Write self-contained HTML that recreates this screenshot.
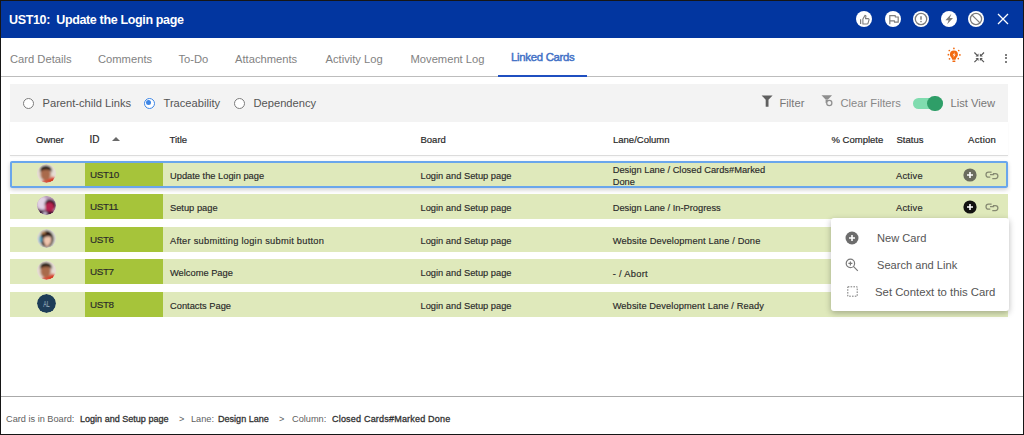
<!DOCTYPE html>
<html><head><meta charset="utf-8">
<style>
*{margin:0;padding:0;box-sizing:border-box}
html,body{width:1024px;height:435px;overflow:hidden;background:#fff}
body{font-family:"Liberation Sans",sans-serif;position:relative;color:#333}
.a{position:absolute;white-space:nowrap;line-height:1}
#frame{position:absolute;left:0;top:0;width:1024px;height:435px;border:1px solid #161616;pointer-events:none;z-index:50}
#hdr{position:absolute;left:0;top:0;width:1024px;height:38px;background:#0236a0}
.title{left:9px;top:14px;font-size:12.5px;font-weight:bold;color:#fff;letter-spacing:-0.35px}
.hic{position:absolute;top:10.5px;width:16.5px;height:16.5px;border-radius:50%;background:#fff}
.hic svg{position:absolute;left:0;top:0;width:16.5px;height:16.5px}
.tab{top:53.5px;font-size:11.2px;color:#828282}
.tabline{position:absolute;left:1px;top:76px;width:1022px;height:1px;background:#bdbdbd}
.panel{position:absolute;left:10px;top:84px;width:998px;height:38px;background:#f3f3f3}
.rad{position:absolute;top:98px;width:11px;height:11px;border-radius:50%;border:1.6px solid #7c7c7c;background:#fff}
.rlab{top:98px;font-size:11.15px;color:#555}
.th{position:absolute;left:10px;top:122px;width:998px;height:34px;background:#fff;border-bottom:1px solid #dcdcdc;box-shadow:0 1px 2px rgba(0,0,0,0.04)}
.hl{top:135px;font-size:9.5px;color:#2a2a2a;-webkit-text-stroke:0.2px #2a2a2a}
.row{position:absolute;left:10px;width:998px;height:25px;background:#dfe9bb}
.idc{position:absolute;left:75px;top:0;width:78px;height:100%;background:#a6c43a}
.idt{font-size:9.9px !important;letter-spacing:-0.4px}
.cell{font-size:9.3px;color:#2a2a2a;-webkit-text-stroke:0.15px #2a2a2a}
.av{position:absolute;left:37px;width:19px;height:19px;border-radius:50%;overflow:hidden}
.ic{position:absolute}
.pop{font-size:11.1px;color:#555}
.foot{top:415px;font-size:9.2px;color:#606060}
.fb{font-weight:normal;color:#333;font-size:9.05px;-webkit-text-stroke:0.3px #333}
</style></head>
<body>
<div id="hdr"></div>
<div class="a title">UST10:&nbsp; Update the Login page</div>
<svg class="ic" style="left:856px;top:10.5px" width="16" height="16" viewBox="0 0 16 16"><circle cx="8" cy="8" r="8" fill="#fff"/><path d="M4.6 8.2v4.8" fill="none" stroke="#7d7d7d" stroke-width="1.2"/><path d="M6.9 13V8.1L8.9 4.4c.7 0 1.1.5 1 1.1l-.4 2.1h2.6c.7 0 1.1.6.9 1.2l-1 3.5c-.1.4-.5.7-.9.7z" fill="none" stroke="#7d7d7d" stroke-width="1.1" stroke-linejoin="round"/></svg>
<svg class="ic" style="left:885.2px;top:10.5px" width="16" height="16" viewBox="0 0 16 16"><circle cx="8" cy="8" r="8" fill="#fff"/><path d="M4.8 13.2V4.6h5.3l.3 1.4h2.8v5.2H9.6l-.3-1.4H4.8" fill="none" stroke="#7d7d7d" stroke-width="1.2" stroke-linejoin="miter"/></svg>
<svg class="ic" style="left:913px;top:10.5px" width="16" height="16" viewBox="0 0 16 16"><circle cx="8" cy="8" r="8" fill="#fff"/><circle cx="8" cy="8" r="5.7" fill="none" stroke="#7d7d7d" stroke-width="1.3"/><path d="M8 5.2v3.6" stroke="#7d7d7d" stroke-width="1.5"/><circle cx="8" cy="10.6" r=".8" fill="#7d7d7d"/></svg>
<svg class="ic" style="left:940.6px;top:10.5px" width="16" height="16" viewBox="0 0 16 16"><circle cx="8" cy="8" r="8" fill="#fff"/><path d="M10.4 2.8 4.4 9.2h3.2l-1.4 4.1 5.8-6.4H8.8z" fill="#7d7d7d"/></svg>
<svg class="ic" style="left:968.1px;top:10.5px" width="16" height="16" viewBox="0 0 16 16"><circle cx="8" cy="8" r="8" fill="#fff"/><circle cx="8" cy="8" r="5.6" fill="none" stroke="#7d7d7d" stroke-width="1.3"/><path d="M4.1 4.1 11.9 11.9" stroke="#7d7d7d" stroke-width="1.3"/></svg>
<svg class="ic" style="left:997.3px;top:12.7px" width="12" height="12" viewBox="0 0 12 12"><path d="M1 1 11 11M11 1 1 11" stroke="#fff" stroke-width="1.3"/></svg>

<!-- tabs -->
<div class="a tab" style="left:10px">Card Details</div>
<div class="a tab" style="left:98px">Comments</div>
<div class="a tab" style="left:178.5px">To-Do</div>
<div class="a tab" style="left:235px">Attachments</div>
<div class="a tab" style="left:325.5px">Activity Log</div>
<div class="a tab" style="left:410.5px">Movement Log</div>
<div class="a tab" style="left:511px;top:51.5px;color:#4170c6;font-size:11.4px;letter-spacing:-0.3px;-webkit-text-stroke:0.45px #4170c6">Linked Cards</div>
<div class="tabline"></div>
<svg class="ic" style="left:946px;top:47px" width="16" height="17" viewBox="0 0 16 17"><g fill="#f26a10"><path d="M3.9 7.6a4 4 0 0 1 8 0c0 1.7-1.1 2.7-1.7 3.5L9.5 12.8H6.3L5.6 11.1C5 10.3 3.9 9.3 3.9 7.6Z"/><rect x="6.3" y="13.4" width="3.2" height="1.5" rx=".7"/><circle cx="7.9" cy="1.4" r=".85"/><circle cx="3.3" cy="3.5" r=".85"/><circle cx="12.7" cy="3.5" r=".85"/><circle cx="2.4" cy="7.7" r=".85"/><circle cx="13.9" cy="7.9" r=".85"/><circle cx="3.5" cy="11.8" r=".85"/><circle cx="12.3" cy="11.6" r=".85"/></g><path d="M8.9 5.2 6.6 8.3h1.5l-.8 2.4 2.3-3.2H8.2z" fill="#fff"/></svg>
<svg class="ic" style="left:973px;top:51px" width="13" height="13" viewBox="0 0 13 13"><g transform="translate(0.2 0.3)"><g stroke="#555" stroke-width="1.2" fill="none"><path d="M1.2 1.2 4 4M10.8 1.2 8 4M1.2 10.8 4 8M10.8 10.8 8 8"/></g><g fill="#555"><path d="M5.3 5.3V2.3L2.3 5.3z"/><path d="M6.7 5.3V2.3l3 3z"/><path d="M5.3 6.7v3l-3-3z"/><path d="M6.7 6.7v3l3-3z"/></g></g></svg>
<div style="position:absolute;left:1005.2px;top:53.5px;width:2px;height:2px;background:#555;border-radius:1px"></div>
<div style="position:absolute;left:1005.2px;top:57.2px;width:2px;height:2px;background:#555;border-radius:1px"></div>
<div style="position:absolute;left:1005.2px;top:61px;width:2px;height:2px;background:#555;border-radius:1px"></div>

<div style="position:absolute;left:498px;top:74.5px;width:89px;height:2.5px;background:#1f4fc0"></div>

<!-- panel -->
<div class="panel"></div>
<div class="rad" style="left:22.5px"></div>
<div class="a rlab" style="left:42.5px">Parent-child Links</div>
<div class="rad" style="left:144px;border-color:#3d86e6"><div style="position:absolute;left:1.4px;top:1.4px;width:5px;height:5px;border-radius:50%;background:#3d86e6"></div></div>
<div class="a rlab" style="left:163.5px">Traceability</div>
<div class="rad" style="left:233.5px"></div>
<div class="a rlab" style="left:253.5px">Dependency</div>

<svg class="ic" style="left:761px;top:95px" width="12" height="12" viewBox="0 0 12 12"><path d="M0.6 0.4h11l-4.1 4.3v7H4.7v-7z" fill="#5f5f5f"/></svg>
<svg class="ic" style="left:821px;top:94.5px" width="12" height="12" viewBox="0 0 12 12"><path d="M0.5 0.3h10.5L7 4.6H4.6z" fill="#8e8e8e"/><path d="M4.6 4.6h2.3v3.5H4.6z" fill="#8e8e8e"/><circle cx="8.3" cy="8" r="2.6" fill="#f2f2f2" stroke="#8e8e8e" stroke-width="1.2"/></svg>
<div class="a rlab" style="left:779.5px;font-size:11.2px;color:#777">Filter</div>
<div class="a rlab" style="left:840.5px;font-size:11.2px;color:#888">Clear Filters</div>
<div style="position:absolute;left:912.5px;top:98px;width:30px;height:11px;border-radius:6px;background:#80dcaf"></div>
<div style="position:absolute;left:927px;top:95.5px;width:15.5px;height:15.5px;border-radius:50%;background:#2f9e68"></div>
<div class="a rlab" style="left:950.5px;font-size:11.2px;color:#777">List View</div>

<!-- table header -->
<div class="th"></div>
<div class="a hl" style="left:36px">Owner</div>
<div class="a hl" style="left:89.5px;top:134.6px;font-size:10px">ID</div>
<svg class="ic" style="left:111px;top:136px" width="10" height="6" viewBox="0 0 10 6"><path d="M1 5 5 1 9 5z" fill="#6a6a6a"/></svg>
<div class="a hl" style="left:169.5px">Title</div>
<div class="a hl" style="left:420.5px">Board</div>
<div class="a hl" style="left:613px">Lane/Column</div>
<div class="a hl" style="left:831.5px">% Complete</div>
<div class="a hl" style="left:896.5px">Status</div>
<div class="a hl" style="left:968px;letter-spacing:0.3px">Action</div>

<!-- rows -->
<div class="row" style="top:162px"><div class="idc"></div></div>
<div style="position:absolute;left:10px;top:161px;width:998px;height:27px;border:2px solid #6aa6ec;border-radius:2px;z-index:2;box-shadow:0 2px 4px rgba(0,0,0,0.18)"></div>
<div class="av" style="top:164px"><svg width="19" height="19" viewBox="0 0 19 19"><defs><clipPath id="c0"><circle cx="9.5" cy="9.5" r="9.5"/></clipPath><filter id="f0" x="-30%" y="-30%" width="160%" height="160%"><feGaussianBlur stdDeviation="0.9"/></filter></defs><g clip-path="url(#c0)"><rect width="19" height="19" fill="#e6ddd3"/><g filter="url(#f0)"><rect x="-3" y="-3" width="25" height="25" fill="#e6ddd3"/><ellipse cx="8.6" cy="10" rx="5.2" ry="6.6" fill="#a96a4b"/><path d="M2.8 8Q2.6 1.4 9 1.6Q15.4 1.8 15 8.6Q13.6 5.4 9 5.4Q4.6 5.6 2.8 8Z" fill="#261a12"/><path d="M4 19Q5.5 15.8 9.5 16.4Q13 14.4 15.5 12.4L19.5 15V19.5H4Z" fill="#d63c22"/></g></g></svg></div>
<div class="a cell idt" style="left:90px;top:170px">UST10</div>
<div class="a cell" style="left:170px;top:172px">Update the Login page</div>
<div class="a cell" style="left:420.5px;top:172px">Login and Setup page</div>
<div class="a cell" style="left:612.7px;top:166px">Design Lane / Closed Cards#Marked</div>
<div class="a cell" style="left:612.7px;top:177.5px">Done</div>
<div class="a cell" style="left:896px;top:171.5px;letter-spacing:0.25px">Active</div>
<svg class="ic" style="left:962.5px;top:168px" width="14" height="14" viewBox="0 0 14 14"><circle cx="7" cy="7" r="6.6" fill="#6a6c5e"/><path d="M7 4v6M4 7h6" stroke="#fff" stroke-width="1.6"/></svg>
<svg class="ic" style="left:985px;top:170.5px" width="14" height="10" viewBox="0 0 14 10"><path d="M6.6 1.2H3.5a2.5 2.5 0 0 0 0 5H5.3M5 3.6H9.2M7.9 2.6H10.4a2.5 2.5 0 0 1 0 5H7.3" fill="none" stroke="#868a72" stroke-width="1.25"/></svg>
<div class="row" style="top:194px"><div class="idc"></div></div>
<div class="av" style="top:196px"><svg width="19" height="19" viewBox="0 0 19 19"><defs><clipPath id="c1"><circle cx="9.5" cy="9.5" r="9.5"/></clipPath><filter id="f1" x="-30%" y="-30%" width="160%" height="160%"><feGaussianBlur stdDeviation="0.9"/></filter></defs><g clip-path="url(#c1)"><rect width="19" height="19" fill="#b89ab8"/><g filter="url(#f1)"><rect x="-3" y="-3" width="25" height="25" fill="#b89ab8"/><ellipse cx="5" cy="7" rx="5.5" ry="6.5" fill="#e2d2e4"/><path d="M7.5 9Q8 3.5 13 3.6Q18.5 4 19 9.5L18 13Z" fill="#1e0c18"/><ellipse cx="12.6" cy="11.2" rx="4.6" ry="5.2" fill="#b8244f"/><path d="M-1 12.5Q5 15 9 14.6Q13 16.5 20 14.5V20H-1Z" fill="#3e1636"/><ellipse cx="8" cy="17.6" rx="2.4" ry="1.5" fill="#d8cce4"/></g></g></svg></div>
<div class="a cell idt" style="left:90px;top:202px">UST11</div>
<div class="a cell" style="left:170px;top:204px">Setup page</div>
<div class="a cell" style="left:420.5px;top:204px">Login and Setup page</div>
<div class="a cell" style="left:612.7px;top:204px">Design Lane / In-Progress</div>
<div class="a cell" style="left:896px;top:203.5px;letter-spacing:0.25px">Active</div>
<svg class="ic" style="left:962.5px;top:200px" width="14" height="14" viewBox="0 0 14 14"><circle cx="7" cy="7" r="6.6" fill="#111"/><path d="M7 4v6M4 7h6" stroke="#fff" stroke-width="1.6"/></svg>
<svg class="ic" style="left:985px;top:202.5px" width="14" height="10" viewBox="0 0 14 10"><path d="M6.6 1.2H3.5a2.5 2.5 0 0 0 0 5H5.3M5 3.6H9.2M7.9 2.6H10.4a2.5 2.5 0 0 1 0 5H7.3" fill="none" stroke="#868a72" stroke-width="1.25"/></svg>
<div class="row" style="top:227px"><div class="idc"></div></div>
<div class="av" style="top:229px"><svg width="19" height="19" viewBox="0 0 19 19"><defs><clipPath id="c2"><circle cx="9.5" cy="9.5" r="9.5"/></clipPath><filter id="f2" x="-30%" y="-30%" width="160%" height="160%"><feGaussianBlur stdDeviation="0.9"/></filter></defs><g clip-path="url(#c2)"><rect width="19" height="19" fill="#dcdcd2"/><g filter="url(#f2)"><rect x="-3" y="-3" width="25" height="25" fill="#dcdcd2"/><ellipse cx="9.8" cy="10" rx="6.8" ry="8.6" fill="#2a1612"/><ellipse cx="10.4" cy="10.8" rx="4" ry="5.6" fill="#efc6ae"/><path d="M6 7.5Q9.5 3 14.5 5.5L14 8Q10.5 6.2 6.4 9Z" fill="#2a1612"/><ellipse cx="3.6" cy="10.5" rx="1.6" ry="3.2" fill="#58a8c4"/><ellipse cx="6.5" cy="3.8" rx="2.4" ry="1.5" fill="#b07a4c"/><ellipse cx="10" cy="16" rx="2.2" ry="1.6" fill="#e8b8a0"/></g></g></svg></div>
<div class="a cell idt" style="left:90px;top:235px">UST6</div>
<div class="a cell" style="left:170px;top:237px;letter-spacing:0.25px">After submitting login submit button</div>
<div class="a cell" style="left:420.5px;top:237px">Login and Setup page</div>
<div class="a cell" style="left:612.7px;top:237px;letter-spacing:0.12px">Website Development Lane / Done</div>
<div class="row" style="top:259px"><div class="idc"></div></div>
<div class="av" style="top:261px"><svg width="19" height="19" viewBox="0 0 19 19"><defs><clipPath id="c3"><circle cx="9.5" cy="9.5" r="9.5"/></clipPath><filter id="f3" x="-30%" y="-30%" width="160%" height="160%"><feGaussianBlur stdDeviation="0.9"/></filter></defs><g clip-path="url(#c3)"><rect width="19" height="19" fill="#e6ddd3"/><g filter="url(#f3)"><rect x="-3" y="-3" width="25" height="25" fill="#e6ddd3"/><ellipse cx="8.6" cy="10" rx="5.2" ry="6.6" fill="#a96a4b"/><path d="M2.8 8Q2.6 1.4 9 1.6Q15.4 1.8 15 8.6Q13.6 5.4 9 5.4Q4.6 5.6 2.8 8Z" fill="#261a12"/><path d="M4 19Q5.5 15.8 9.5 16.4Q13 14.4 15.5 12.4L19.5 15V19.5H4Z" fill="#d63c22"/></g></g></svg></div>
<div class="a cell idt" style="left:90px;top:267px">UST7</div>
<div class="a cell" style="left:170px;top:269px">Welcome Page</div>
<div class="a cell" style="left:420.5px;top:269px">Login and Setup page</div>
<div class="a cell" style="left:612.7px;top:269.5px;letter-spacing:0.3px">- / Abort</div>
<div class="row" style="top:292px"><div class="idc"></div></div>
<div class="av" style="top:294px"><svg width="19" height="19" viewBox="0 0 19 19"><circle cx="9.5" cy="9.5" r="9.5" fill="#1e3d58"/><text x="9.5" y="13" text-anchor="middle" font-family="Liberation Sans" font-size="9.4" fill="#a9bccb" transform="translate(9.5 0) scale(0.56 1) translate(-9.5 0)">AL</text></svg></div>
<div class="a cell idt" style="left:90px;top:300px">UST8</div>
<div class="a cell" style="left:170px;top:302px">Contacts Page</div>
<div class="a cell" style="left:420.5px;top:302px">Login and Setup page</div>
<div class="a cell" style="left:612.7px;top:302px;letter-spacing:0.08px">Website Development Lane / Ready</div>
<!-- popup -->
<div style="position:absolute;left:831px;top:217.5px;width:177.5px;height:93px;background:#fff;border-radius:3px;box-shadow:0 2px 6px rgba(0,0,0,0.28)"></div>
<svg class="ic" style="left:845px;top:231px" width="14" height="14" viewBox="0 0 14 14"><circle cx="7" cy="7" r="6.5" fill="#6d6d6d"/><path d="M7 4v6M4 7h6" stroke="#fff" stroke-width="1.6"/></svg>
<svg class="ic" style="left:845px;top:257.5px" width="14" height="14" viewBox="0 0 14 14"><g fill="none" stroke="#7a7a7a" stroke-width="1.2"><circle cx="5.4" cy="5.4" r="4.2"/><path d="M8.4 8.4 12.8 12.8M5.4 3.4v4M3.4 5.4h4"/></g></svg>
<svg class="ic" style="left:846.5px;top:286px" width="11" height="11" viewBox="0 0 11 11"><rect x="0.8" y="0.8" width="9.4" height="9.4" fill="none" stroke="#7a7a7a" stroke-width="1" stroke-dasharray="1.6 1.2"/></svg>
<div class="a pop" style="left:877px;top:233px">New Card</div>
<div class="a pop" style="left:877px;top:260px">Search and Link</div>
<div class="a pop" style="left:875px;top:287px;font-size:11.35px">Set Context to this Card</div>

<!-- footer -->
<div style="position:absolute;left:1px;top:396px;width:1022px;height:1px;background:#aaa"></div>
<div class="a foot" style="left:6px">Card is in Board:</div>
<div class="a foot fb" style="left:80px">Login and Setup page</div>
<div class="a foot" style="left:179px">&gt;</div>
<div class="a foot" style="left:191px">Lane:</div>
<div class="a foot fb" style="left:218px">Design Lane</div>
<div class="a foot" style="left:279px">&gt;</div>
<div class="a foot" style="left:292px">Column:</div>
<div class="a foot fb" style="left:332px;letter-spacing:0.18px">Closed Cards#Marked Done</div>

<div id="frame"></div>
</body></html>
